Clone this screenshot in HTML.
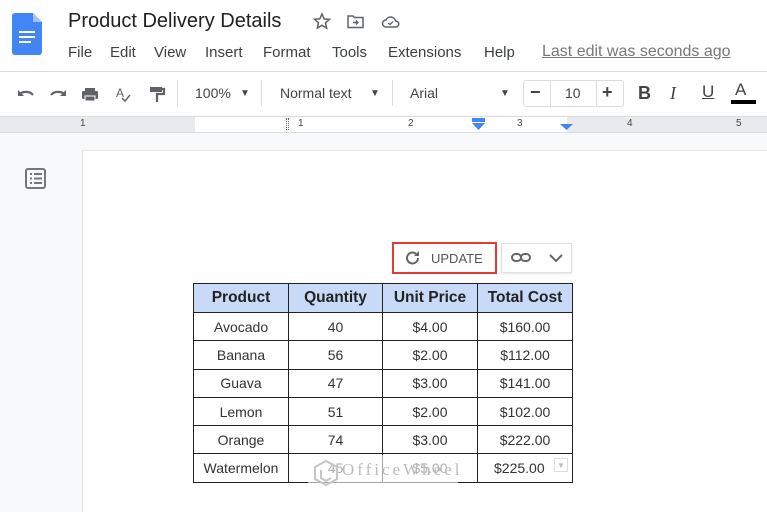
<!DOCTYPE html>
<html><head><meta charset="utf-8"><style>
*{margin:0;padding:0;box-sizing:border-box}
body{width:767px;height:512px;overflow:hidden;background:#f8f9fa;font-family:"Liberation Sans",Arial,sans-serif;position:relative}
.a{position:absolute}
.top{left:0;top:0;width:767px;height:71px;background:#fff}
.title{left:68px;top:10px;font-size:20px;color:#202124}
.menu{top:44px;font-size:15px;color:#3c4043}
.tb{left:0;top:71px;width:767px;height:44px;background:#fff;border-top:1px solid #dadce0}
.sep{top:80px;width:1px;height:26px;background:#dadce0}
.tt{top:85px;font-size:14px;color:#444}
.ruler{left:0;top:116px;width:767px;height:17px;background:#e8eaed;border-top:1px solid #dadce0;border-bottom:1px solid #dadce0}
.rn{top:118px;font-size:10px;color:#444}
table{position:absolute;left:193px;top:283px;border-collapse:collapse;font-size:14px;color:#333}
td{border:1px solid #222;height:28.3px;text-align:center;padding:0}
th{border:1px solid #222;background:#c9daf8;height:29px;font-size:15.5px;font-weight:bold;padding:0;color:#222}
</style></head><body>
<div class="a top"></div>
<svg class="a" style="left:12px;top:13px" width="30" height="42" viewBox="0 0 30 42"><path d="M3 0h18l9 9v30a3 3 0 0 1-3 3H3a3 3 0 0 1-3-3V3a3 3 0 0 1 3-3z" fill="#4285f4"/><path d="M21 0l9 9h-9z" fill="#a1c2fa"/><rect x="7" y="18" width="16" height="2" fill="#fff"/><rect x="7" y="23" width="16" height="2" fill="#fff"/><rect x="7" y="28" width="12" height="2" fill="#fff"/></svg>
<div class="a title">Product Delivery Details</div>
<svg class="a" style="left:313px;top:12px" width="100" height="20" viewBox="0 0 100 20"><path d="M9 2l2.2 5 5.3.4-4 3.5 1.2 5.2L9 13.3 4.3 16l1.2-5.2-4-3.5 5.3-.4z" fill="none" stroke="#5f6368" stroke-width="1.5"/><path d="M35 4h5l1.5 1.5H50v10H35z" fill="none" stroke="#5f6368" stroke-width="1.5"/><path d="M40 10.5h5m-2-2 2 2-2 2" stroke="#5f6368" stroke-width="1.4" fill="none"/><path d="M73 15a3.5 3.5 0 0 1 0-7 5 5 0 0 1 9.5 1A3 3 0 0 1 83 15z" fill="none" stroke="#5f6368" stroke-width="1.5"/><path d="M75 11l2 1.5 3-3" stroke="#5f6368" stroke-width="1.3" fill="none"/></svg>
<div class="a menu" style="left:68px">File</div>
<div class="a menu" style="left:110px">Edit</div>
<div class="a menu" style="left:154px">View</div>
<div class="a menu" style="left:205px">Insert</div>
<div class="a menu" style="left:263px">Format</div>
<div class="a menu" style="left:332px">Tools</div>
<div class="a menu" style="left:388px">Extensions</div>
<div class="a menu" style="left:484px">Help</div>
<div class="a menu" style="left:542px;color:#777;text-decoration:underline;font-size:16px;top:43px">Last edit was seconds ago</div>
<div class="a tb"></div>
<svg class="a" style="left:15px;top:84px" width="155" height="20" viewBox="0 0 155 20"><path d="M4 11a8 6 0 0 1 14 0" fill="none" stroke="#5f6368" stroke-width="2.2"/><path d="M3 6v6h6z" fill="#5f6368"/><path d="M50 11a8 6 0 0 0-14 0" fill="none" stroke="#5f6368" stroke-width="2.2"/><path d="M51 6v6h-6z" fill="#5f6368"/><rect x="70" y="4" width="10" height="3" fill="#5f6368"/><rect x="67" y="7" width="16" height="8" rx="1.5" fill="#5f6368"/><rect x="70" y="12" width="10" height="5" fill="#5f6368" stroke="#fff"/><text x="101" y="13" font-size="12" fill="#5f6368" font-family="Liberation Sans">A</text><path d="M107 14l3 3 5-6" fill="none" stroke="#5f6368" stroke-width="1.5"/><rect x="135" y="3" width="12" height="5" fill="#5f6368"/><path d="M147 5h2v5h-7v8" fill="none" stroke="#5f6368" stroke-width="2.2"/></svg>
<div class="a sep" style="left:177px"></div>
<div class="a tt" style="left:195px">100%</div>
<div class="a tt" style="left:240px;font-size:10px;top:88px">▼</div>
<div class="a sep" style="left:261px"></div>
<div class="a tt" style="left:280px">Normal text</div>
<div class="a tt" style="left:370px;font-size:10px;top:88px">▼</div>
<div class="a sep" style="left:392px"></div>
<div class="a tt" style="left:410px">Arial</div>
<div class="a tt" style="left:500px;font-size:10px;top:88px">▼</div>
<div class="a" style="left:523px;top:80px;width:101px;height:27px;border:1px solid #dadce0;border-radius:3px"></div>
<div class="a" style="left:550px;top:80px;width:1px;height:27px;background:#dadce0"></div>
<div class="a" style="left:596px;top:80px;width:1px;height:27px;background:#dadce0"></div>
<div class="a tt" style="left:530px;font-size:18px;top:82px;font-weight:bold">−</div>
<div class="a tt" style="left:565px">10</div>
<div class="a tt" style="left:602px;font-size:18px;top:82px;font-weight:bold">+</div>
<div class="a" style="left:638px;top:83px;font-size:18px;font-weight:bold;color:#444">B</div>
<div class="a" style="left:670px;top:83px;font-size:18px;font-style:italic;color:#444;font-family:'Liberation Serif'">I</div>
<div class="a" style="left:702px;top:82px;font-size:17px;text-decoration:underline;color:#444">U</div>
<div class="a" style="left:735px;top:80px;font-size:17px;color:#444">A</div>
<div class="a" style="left:731px;top:100px;width:25px;height:4px;background:#000"></div>
<div class="a ruler"></div>
<div class="a" style="left:195px;top:117px;width:372px;height:15px;background:#fff"></div>
<div class="a rn" style="left:80px">1</div><div class="a rn" style="left:298px">1</div><div class="a rn" style="left:408px">2</div><div class="a rn" style="left:517px">3</div><div class="a rn" style="left:627px">4</div><div class="a rn" style="left:736px">5</div>
<div class="a" style="left:286px;top:118px;width:3px;height:12px;border-left:1px dotted #666;border-right:1px dotted #666"></div>
<svg class="a" style="left:471px;top:118px" width="110" height="14"><rect x="1" y="0" width="13" height="4" fill="#4285f4"/><path d="M1 5h13l-6.5 7z" fill="#4285f4"/><path d="M89 6h13l-6.5 6z" fill="#4285f4"/></svg>
<div class="a" style="left:82px;top:150px;width:685px;height:362px;background:#fff;border-left:1px solid #e0e0e0;border-top:1px solid #e8e8e8"></div>
<svg class="a" style="left:25px;top:168px" width="22" height="22"><rect x="1" y="1" width="19" height="19" rx="2" fill="none" stroke="#777" stroke-width="2"/><path d="M5 6h2M5 10.5h2M5 15h2M9 6h8M9 10.5h8M9 15h8" stroke="#777" stroke-width="2"/></svg>
<div class="a" style="left:392px;top:242px;width:105px;height:32px;border:2.5px solid #e53935;background:#fff"></div>
<svg class="a" style="left:404px;top:249px" width="18" height="18"><path d="M14 9a5.5 5.5 0 1 1-1.6-3.9" fill="none" stroke="#666" stroke-width="2"/><path d="M15 2v5h-5z" fill="#666"/></svg>
<div class="a" style="left:431px;top:251px;font-size:13px;color:#555">UPDATE</div>
<div class="a" style="left:501px;top:243px;width:71px;height:30px;border:1px solid #e0e0e0;background:#fff;box-shadow:0 1px 2px rgba(0,0,0,.1)"></div>
<svg class="a" style="left:510px;top:250px" width="56" height="16"><rect x="2" y="4" width="9" height="7" rx="3.5" fill="none" stroke="#666" stroke-width="2"/><rect x="11" y="4" width="9" height="7" rx="3.5" fill="none" stroke="#666" stroke-width="2"/><path d="M40 5l6 6 6-6" fill="none" stroke="#666" stroke-width="2"/></svg>
<table>
<tr><th style="width:95px">Product</th><th style="width:94px">Quantity</th><th style="width:95px">Unit Price</th><th style="width:95px">Total Cost</th></tr>
<tr><td>Avocado</td><td>40</td><td>$4.00</td><td>$160.00</td></tr>
<tr><td>Banana</td><td>56</td><td>$2.00</td><td>$112.00</td></tr>
<tr><td>Guava</td><td>47</td><td>$3.00</td><td>$141.00</td></tr>
<tr><td>Lemon</td><td>51</td><td>$2.00</td><td>$102.00</td></tr>
<tr><td>Orange</td><td>74</td><td>$3.00</td><td>$222.00</td></tr>
<tr><td>Watermelon</td><td>45</td><td>$5.00</td><td style="text-align:left;padding-left:16px">$225.00</td></tr>
</table>
<div class="a" style="left:554px;top:458px;width:14px;height:14px;border:1px solid #ddd;font-size:8px;color:#bbb;text-align:center;line-height:13px">▼</div>
<div class="a" style="left:308px;top:455px;width:150px;height:31px;background:rgba(255,255,255,.6)"></div>
<div class="a" style="left:342px;top:460px;font-size:17px;letter-spacing:3px;color:#bbb;font-family:'Liberation Serif'">OfficeWheel</div>
<svg class="a" style="left:312px;top:459px" width="28" height="28"><path d="M14 2l11 6v12l-11 6-11-6V8z" fill="none" stroke="#c5c5c5" stroke-width="2"/><path d="M9 11v8l5 3 5-3" fill="none" stroke="#c5c5c5" stroke-width="2"/></svg>
</body></html>
